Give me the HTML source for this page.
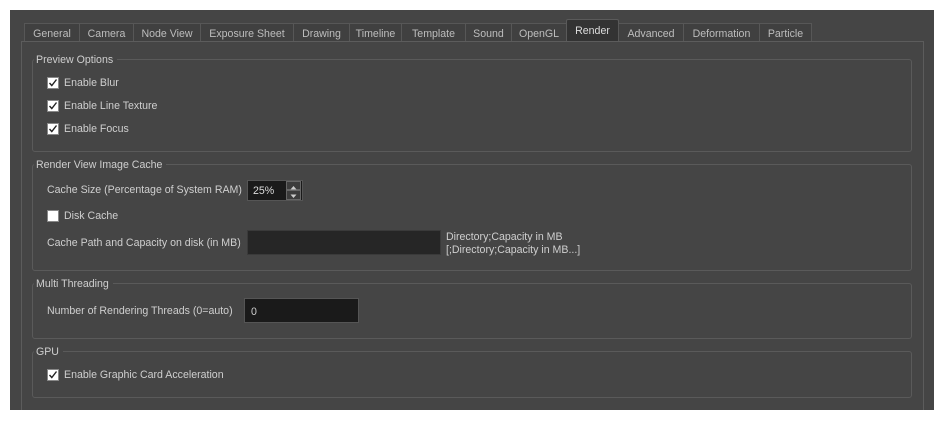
<!DOCTYPE html><html><head><style>
body{margin:0;width:944px;height:421px;background:#fff;position:relative;overflow:hidden;font-family:"Liberation Sans",sans-serif;font-size:10.6px;color:#d0d0d0}
.a{position:absolute}
#bg{left:10px;top:10px;width:924px;height:400px;background:#454545}
.tab{position:absolute;top:23px;height:18px;line-height:20px;text-align:center;background:#404040;border:1px solid #575757;border-bottom:none;box-sizing:border-box;color:#bdbdbd}
.sel{top:19px;height:22px;background:#333;color:#ddd;border-color:#5a5a5a;line-height:22px;border-radius:2px 2px 0 0}
#panel{left:21px;top:41px;width:903px;height:380px;border:1px solid #5c5c5c;box-sizing:border-box}
.grp{position:absolute;left:32px;width:880px;border:1px solid #5a5a5a;border-radius:3px;box-sizing:border-box}
.gt{position:absolute;left:34px;background:#454545;padding:0 4px 0 2px;color:#cfcfcf}
.cb{position:absolute;left:47px;width:12px;height:12px;background:#fff;border:1px solid #888;box-sizing:border-box}
.cb svg{position:absolute;left:0;top:0}
.lb{position:absolute;color:#cfcfcf}
.inp{position:absolute;background:#1e1e1e;border:1px solid #555;box-sizing:border-box}
</style></head><body>
<div id="bg" class="a"></div>
<div id="panel" class="a"></div>
<div class="tab" style="left:24px;width:56px">General</div>
<div class="tab" style="left:79px;width:55px">Camera</div>
<div class="tab" style="left:133px;width:68px">Node View</div>
<div class="tab" style="left:200px;width:94px">Exposure Sheet</div>
<div class="tab" style="left:293px;width:57px">Drawing</div>
<div class="tab" style="left:349px;width:53px">Timeline</div>
<div class="tab" style="left:401px;width:65px">Template</div>
<div class="tab" style="left:465px;width:47px">Sound</div>
<div class="tab" style="left:511px;width:56px">OpenGL</div>
<div class="tab sel" style="left:566px;width:53px">Render</div>
<div class="tab" style="left:618px;width:66px">Advanced</div>
<div class="tab" style="left:683px;width:77px">Deformation</div>
<div class="tab" style="left:759px;width:53px">Particle</div>

<div class="grp" style="top:59px;height:93px"></div><div class="gt" style="top:54px">Preview Options</div>
<div class="grp" style="top:164px;height:107px"></div><div class="gt" style="top:159px">Render View Image Cache</div>
<div class="grp" style="top:283px;height:56px"></div><div class="gt" style="top:278px">Multi Threading</div>
<div class="grp" style="top:351px;height:47px"></div><div class="gt" style="top:346px">GPU</div>

<div class="cb" style="top:77px"><svg width="10" height="10"><path d="M1.5 5L3.8 7.5L8.5 1.5" stroke="#222" stroke-width="1.4" fill="none"/></svg></div><div class="lb" style="left:64px;top:77px">Enable Blur</div>
<div class="cb" style="top:100px"><svg width="10" height="10"><path d="M1.5 5L3.8 7.5L8.5 1.5" stroke="#222" stroke-width="1.4" fill="none"/></svg></div><div class="lb" style="left:64px;top:100px">Enable Line Texture</div>
<div class="cb" style="top:123px"><svg width="10" height="10"><path d="M1.5 5L3.8 7.5L8.5 1.5" stroke="#222" stroke-width="1.4" fill="none"/></svg></div><div class="lb" style="left:64px;top:123px">Enable Focus</div>

<div class="lb" style="left:47px;top:184px">Cache Size (Percentage of System RAM)</div>
<div class="inp" style="left:247px;top:180px;width:56px;height:21px;background:#1a1a1a"></div>
<div class="lb" style="left:253px;top:185px;color:#ddd">25%</div>
<div class="a" style="left:286px;top:181px;width:15px;height:9px;background:#3c3c3c;border:1px solid #666;box-sizing:border-box"><svg width="13" height="7"><path d="M3.5 5.5L6.5 2L9.5 5.5Z" fill="#ccc"/></svg></div>
<div class="a" style="left:286px;top:190px;width:15px;height:10px;background:#3c3c3c;border:1px solid #666;box-sizing:border-box"><svg width="13" height="8"><path d="M3.5 2.5L6.5 6L9.5 2.5Z" fill="#ccc"/></svg></div>
<div class="cb" style="top:210px;background:#fff"></div><div class="lb" style="left:64px;top:210px">Disk Cache</div>
<div class="lb" style="left:47px;top:237px">Cache Path and Capacity on disk (in MB)</div>
<div class="inp" style="left:247px;top:230px;width:194px;height:25px;background:#262626;border-color:#3a3a3a"></div>
<div class="lb" style="left:446px;top:231px;line-height:13px">Directory;Capacity in MB<br>[;Directory;Capacity in MB...]</div>

<div class="lb" style="left:47px;top:305px">Number of Rendering Threads (0=auto)</div>
<div class="inp" style="left:244px;top:298px;width:115px;height:25px;background:#1a1a1a"></div>
<div class="lb" style="left:251px;top:306px">0</div>

<div class="cb" style="top:369px"><svg width="10" height="10"><path d="M1.5 5L3.8 7.5L8.5 1.5" stroke="#222" stroke-width="1.4" fill="none"/></svg></div><div class="lb" style="left:64px;top:369px">Enable Graphic Card Acceleration</div>
<div class="a" style="left:0;top:410px;width:944px;height:11px;background:#fff"></div>
</body></html>
